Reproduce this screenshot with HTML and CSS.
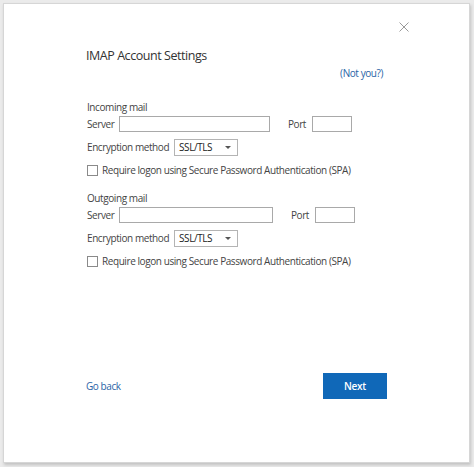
FILE: index.html
```html
<html lang="en">
<head>
    <meta charset="UTF-8">
    <meta name="viewport" content="width=device-width, initial-scale=1.0">
    <title>IMAP Account Settings</title>
    <link rel="stylesheet" href="styles.css">
</head>
<body>
    <div class="dialog">
        <div class="close-row">
            <button class="close" aria-label="Close">
                <svg width="10" height="10" viewBox="0 0 10 10">
                    <path d="M0.5 0.5 L9.5 9.5 M9.5 0.5 L0.5 9.5" stroke="#9a9a9a" stroke-width="1" fill="none"/>
                </svg>
            </button>
        </div>

        <div class="content">
            <h1 class="title">IMAP Account Settings</h1>
            <div class="not-you-row">
                <a href="#" class="link">(Not you?)</a>
            </div>

            <div class="section">
                <div class="section-title">Incoming mail</div>
                <div class="row">
                    <label class="label server-label">Server</label>
                    <input type="text" class="field server">
                    <label class="label port-label">Port</label>
                    <input type="text" class="field port">
                </div>
                <div class="row enc-row">
                    <label class="label enc-label">Encryption method</label>
                    <div class="select">SSL/TLS<span class="arrow"></span></div>
                </div>
                <label class="check-row">
                    <span class="checkbox"></span>
                    Require logon using Secure Password Authentication (SPA)
                </label>
            </div>

            <div class="section outgoing">
                <div class="section-title">Outgoing mail</div>
                <div class="row">
                    <label class="label server-label">Server</label>
                    <input type="text" class="field server wide">
                    <label class="label port-label">Port</label>
                    <input type="text" class="field port">
                </div>
                <div class="row enc-row">
                    <label class="label enc-label">Encryption method</label>
                    <div class="select">SSL/TLS<span class="arrow"></span></div>
                </div>
                <label class="check-row">
                    <span class="checkbox"></span>
                    Require logon using Secure Password Authentication (SPA)
                </label>
            </div>
        </div>

        <div class="footer">
            <a href="#" class="link back">Go back</a>
            <button class="next">Next</button>
        </div>
    </div>
</body>
</html>
```

FILE: styles.css
```css
body {
    font-family: "Open Sans", "Noto Sans", sans-serif;
    background-color: #ebebeb;
    margin: 0;
    padding: 0;
    color: #444444;
    font-size: 10px;
    letter-spacing: -0.42px;
}

.dialog {
    box-sizing: border-box;
    margin: 3px 0 0 3px;
    width: 467px;
    height: 460px;
    background-color: #ffffff;
    border: 1px solid #d6d6d6;
    box-shadow: 1px 2px 3px rgba(0, 0, 0, 0.18);
    display: flex;
    flex-direction: column;
}

.close-row {
    display: flex;
    justify-content: flex-end;
    padding: 18px 60px 0 0;
}

.close {
    border: none;
    background: none;
    padding: 0;
    width: 10px;
    height: 10px;
    display: flex;
}

.content {
    padding-left: 82px;
    width: 297px;
    white-space: nowrap;
}

.title {
    margin: 15px 0 0 0;
    font-size: 12.5px;
    letter-spacing: -0.45px;
    font-weight: normal;
    color: #333333;
    line-height: 18px;
}

.not-you-row {
    display: flex;
    justify-content: flex-end;
    margin-top: 1px;
    line-height: 14px;
}

.link {
    color: #2a64a6;
    text-decoration: none;
}

.section {
    margin-top: 20px;
}

.outgoing {
    margin-top: 14px;
}

.section-title {
    line-height: 14px;
    margin-left: 1px;
}

.row {
    display: flex;
    align-items: center;
    margin-top: 1px;
    height: 18px;
}

.label {
    margin-left: 1px;
    flex-shrink: 0;
}

.server-label {
    width: 32px;
}

.port-label {
    margin-left: 18px;
    width: 24px;
}

.field {
    box-sizing: border-box;
    height: 16px;
    border: 1px solid #a9a9a9;
    padding: 0;
    outline: none;
    flex-shrink: 0;
}

.server {
    width: 151px;
}

.server.wide {
    width: 154px;
}

.port {
    width: 40px;
}

.enc-row {
    margin-top: 5px;
}

.enc-label {
    width: 87px;
}

.select {
    box-sizing: border-box;
    width: 64px;
    height: 17px;
    border: 1px solid #b4b4b4;
    padding-left: 4px;
    display: flex;
    align-items: center;
    justify-content: space-between;
    color: #222222;
    flex-shrink: 0;
}

.arrow {
    width: 0;
    height: 0;
    border-left: 3px solid transparent;
    border-right: 3px solid transparent;
    border-top: 3px solid #555555;
    margin-right: 6px;
}

.check-row {
    display: flex;
    align-items: center;
    gap: 4px;
    margin-top: 7px;
    margin-left: 1px;
    line-height: 14px;
}

.checkbox {
    box-sizing: border-box;
    width: 11px;
    height: 11px;
    border: 1px solid #8a8a8a;
    flex-shrink: 0;
}

.footer {
    margin-top: auto;
    margin-bottom: 63px;
    padding: 0 82px 0 82px;
    display: flex;
    justify-content: space-between;
    align-items: center;
}

.next {
    width: 64px;
    height: 26px;
    border: none;
    background-color: #1068b8;
    color: #ffffff;
    font-family: inherit;
    font-size: 10px;
    letter-spacing: -0.3px;
    font-weight: 600;
}
```
